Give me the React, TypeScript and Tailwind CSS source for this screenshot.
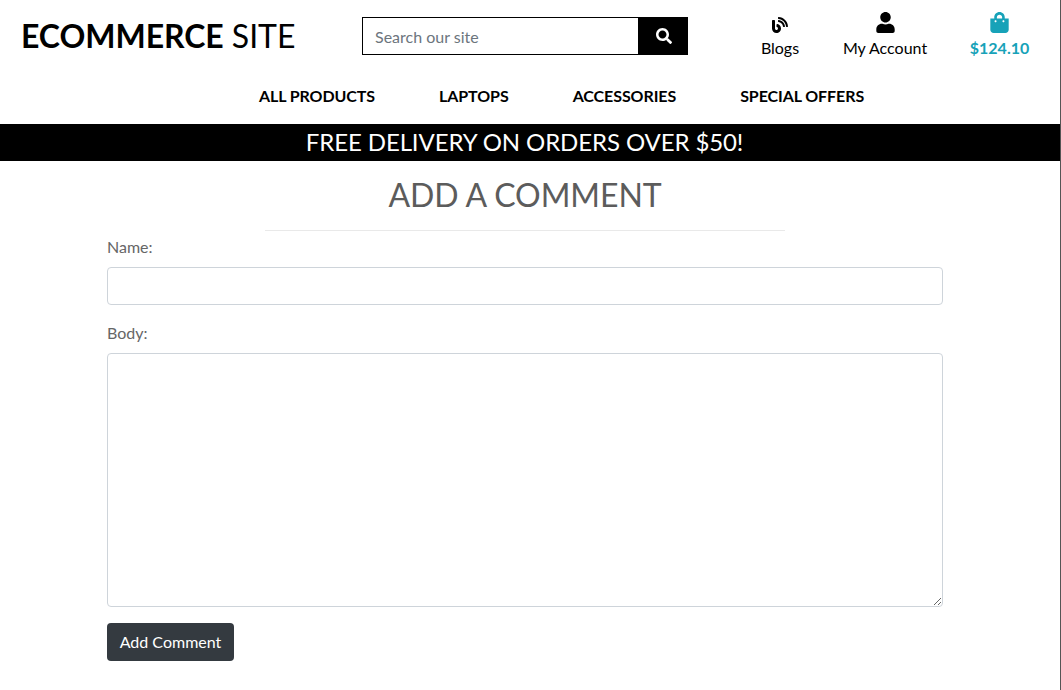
import { FaBlog, FaSearch, FaShoppingBag, FaUser } from 'react-icons/fa'

const lato = { fontFamily: 'Lato, sans-serif' }

const navLinks = ['ALL PRODUCTS', 'LAPTOPS', 'ACCESSORIES', 'SPECIAL OFFERS']

export default function App() {
  return (
    <div style={lato} className="h-[690px] w-[1061px] overflow-hidden border-r border-[#555] bg-white text-[#5c5c5c]">
      <header className="text-black">
        <div className="flex h-[73px]">
          <a className="ml-[21px] mt-[15px] w-[341px] text-[32px] leading-[42px] tracking-[-0.05px]">
            <strong className="font-bold">ECOMMERCE</strong> SITE
          </a>
          <form className="mt-[17px] flex h-[38px] w-[326px]">
            <input
              placeholder="Search our site"
              className="h-full w-[277px] border border-black px-3 text-base placeholder:text-[#6c757d]"
            />
            <button type="button" className="flex h-full w-[49px] items-center justify-center bg-black text-white">
              <FaSearch className="text-base" />
            </button>
          </form>
          <ul className="ml-[73px] flex">
            <li className="mt-[16px] flex w-[38px] flex-col items-center">
              <FaBlog className="mt-[1px] h-4 w-4" />
              <span className="mt-[3px] whitespace-nowrap text-base leading-6">Blogs</span>
            </li>
            <li className="ml-[44px] mt-[12px] flex w-[84px] flex-col items-center">
              <FaUser className="h-[21px] w-[19px]" />
              <span className="mt-[3px] whitespace-nowrap text-base leading-6">My Account</span>
            </li>
            <li className="ml-[43px] mt-[12px] flex w-[59px] flex-col items-center text-[#17a2b8]">
              <FaShoppingBag className="h-[21px] w-[19px]" />
              <span className="mt-[3px] whitespace-nowrap text-base font-bold leading-6">$124.10</span>
            </li>
          </ul>
        </div>
        <nav className="flex h-[51px] justify-center gap-[64px] pt-[11px] pl-[63px] tracking-[-0.08px]">
          {navLinks.map((link) => (
            <a key={link} className="text-base font-bold leading-6">
              {link}
            </a>
          ))}
        </nav>
      </header>
      <div className="h-[37px] bg-black pr-[11px] text-center text-2xl leading-[35px] tracking-[-0.1px] text-white">
        FREE DELIVERY ON ORDERS OVER $50!
      </div>
      <main className="px-[107px]">
        <h2 className="mt-[12px] pr-[10px] text-center text-[32px] leading-[44px] tracking-[-0.06px]">ADD A COMMENT</h2>
        <hr className="ml-[158px] mt-[13px] w-[520px] border-[#e9e9e9]" />
        <form className="w-[836px]">
          <label className="mt-[4px] block text-base leading-6 text-[#666]">Name:</label>
          <input className="mt-2 block h-[38px] w-full rounded border border-[#ced4da]" />
          <label className="mt-4 block text-base leading-6 text-[#666]">Body:</label>
          <textarea className="mt-2 block h-[254px] w-full rounded border border-[#ced4da]" />
          <button type="button" className="mt-4 h-[38px] w-[127px] rounded bg-[#343a40] text-base text-white">
            Add Comment
          </button>
        </form>
      </main>
    </div>
  )
}
